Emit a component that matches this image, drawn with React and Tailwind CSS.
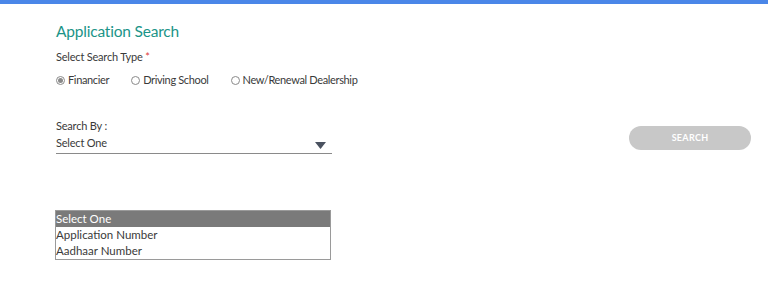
import React, { useState } from 'react';

const options = ['Select One', 'Application Number', 'Aadhaar Number'];
const types = ['Financier', 'Driving School', 'New/Renewal Dealership'];

function Radio({ label, checked, onChange }) {
    return (
        <label className="flex items-center gap-[3px] cursor-pointer" onClick={onChange}>
            <span className="w-[9px] h-[9px] rounded-full border border-[#8a8a8a] flex items-center justify-center bg-white">
                {checked && <span className="w-[5px] h-[5px] rounded-full bg-[#8a8a8a]" />}
            </span>
            <span>{label}</span>
        </label>
    );
}

function App() {
    const [type, setType] = useState('Financier');
    const [selected, setSelected] = useState('Select One');

    return (
        <div className="min-h-screen bg-white font-['Lato',sans-serif] text-[#3a3a3a]">
            <div className="h-[4px] bg-[#4a86e8]" />
            <div className="px-[56px] pt-[17px]">
                <h1 className="text-[15.5px] leading-[20px] tracking-[-0.2px] text-[#1b9488]">Application Search</h1>

                <p className="mt-[9px] text-[11px] leading-[14px] tracking-[-0.2px]">
                    Select Search Type <span className="text-[#e04040]">*</span>
                </p>

                <div className="mt-[9px] flex gap-[22px] text-[11px] leading-[14px] tracking-[-0.35px]">
                    {types.map(t => (
                        <Radio key={t} label={t} checked={type === t} onChange={() => setType(t)} />
                    ))}
                </div>

                <div className="mt-[32px] flex justify-between items-start">
                    <div className="w-[276px]">
                        <p className="text-[11px] leading-[14px] tracking-[-0.2px]">Search By :</p>
                        <div className="mt-[3px] flex items-center justify-between border-b border-[#8a8a8a] pb-[3px] text-[11px] leading-[14px] tracking-[-0.2px]">
                            <span>{selected}</span>
                            <svg width="11" height="7" viewBox="0 0 11 7" className="mr-[6px] mt-[5px]">
                                <path d="M0 0 H11 L5.5 7 Z" fill="#4a5260" />
                            </svg>
                        </div>
                    </div>
                    <button className="mt-[7px] mr-[-39px] w-[122px] h-[24px] rounded-full bg-[#c8c8c8] text-white text-[9px] font-bold tracking-[0.3px]">
                        SEARCH
                    </button>
                </div>

                <ul className="mt-[56px] ml-[-1px] w-[276px] border border-[#9a9a9a] text-[11.5px] leading-[16px]">
                    {options.map(o => (
                        <li
                            key={o}
                            onClick={() => setSelected(o)}
                            className={o === selected ? 'bg-[#7a7a7a] text-white' : 'bg-white text-[#3a3a3a]'}
                        >
                            {o}
                        </li>
                    ))}
                </ul>
            </div>
        </div>
    );
}

export default App;
